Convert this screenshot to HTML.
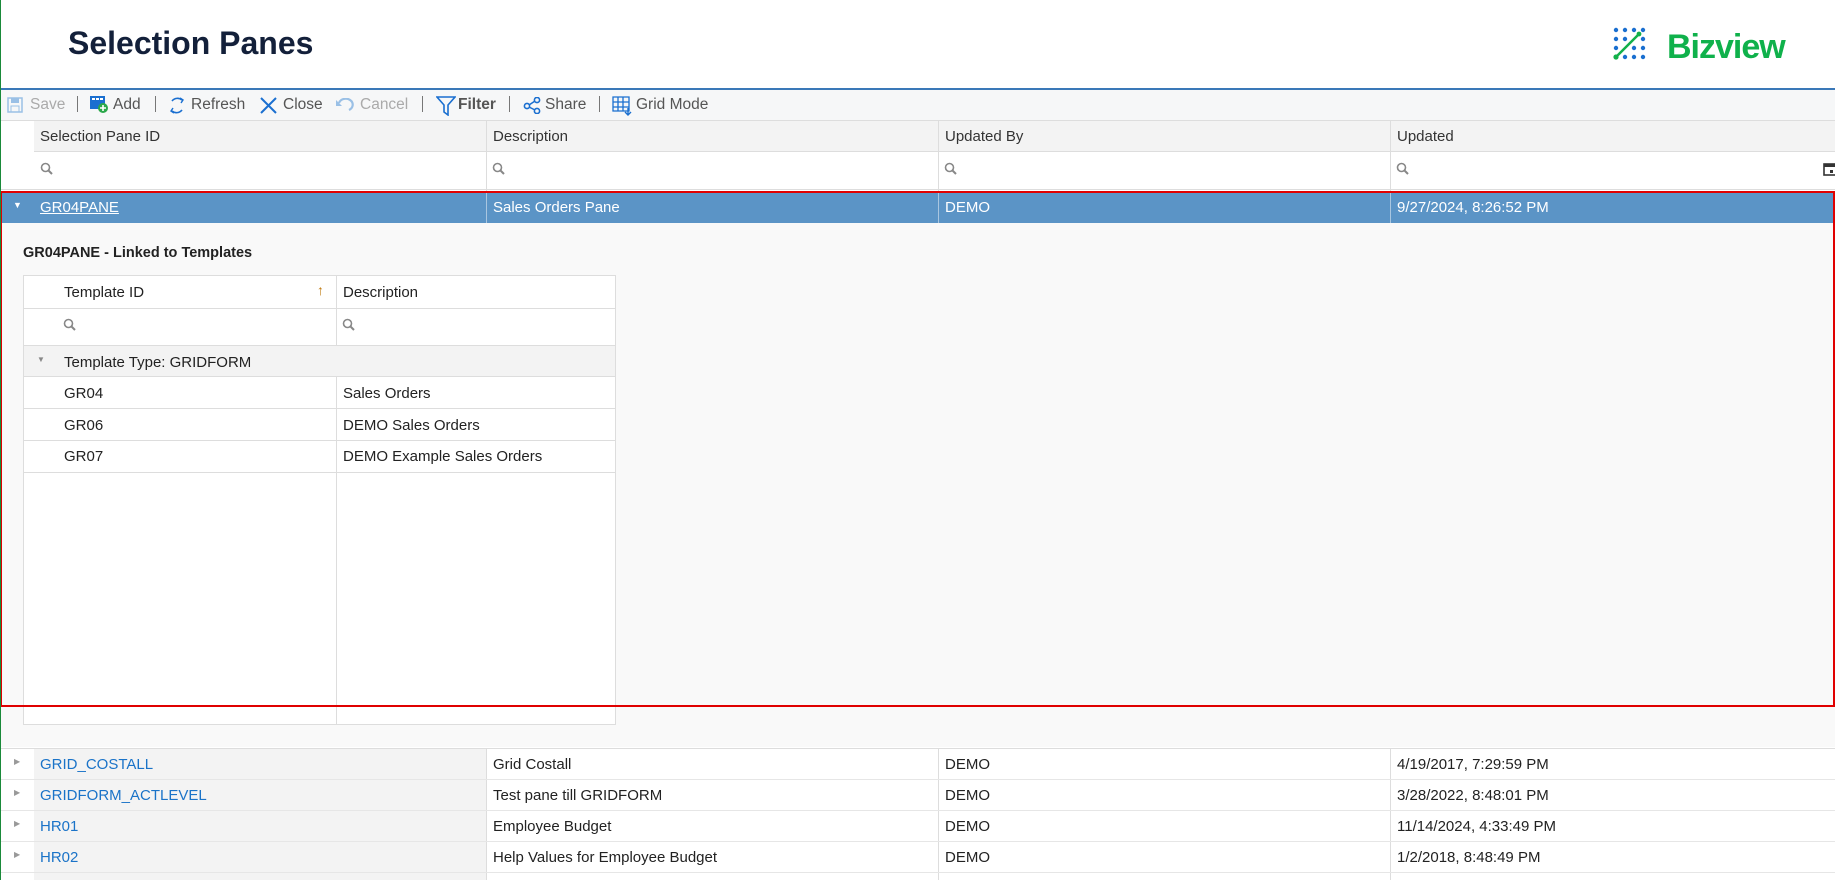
<!DOCTYPE html>
<html><head><meta charset="utf-8"><style>
*{margin:0;padding:0;box-sizing:border-box}
body{width:1835px;height:880px;overflow:hidden;background:#fff;font-family:"Liberation Sans",sans-serif;font-size:15px;color:#222;position:relative}
.a{position:absolute;white-space:nowrap}
.tb{color:#555;top:96px;font-size:15.5px}
.sep{position:absolute;top:96px;width:1px;height:16px;background:#777}
.hl{position:absolute;background:#ddd}
.link{color:#1a73c8}
</style></head><body>
<div class="a" style="left:0;top:0;width:1px;height:880px;background:#1a8a3a"></div>
<div class="a" style="left:68px;top:25px;font-size:32px;font-weight:bold;color:#13203a">Selection Panes</div>
<svg class="a" style="left:1612px;top:26px" width="40" height="38">
<g fill="#1a6fd0"><circle cx="4" cy="4" r="2.2"/><circle cx="13" cy="4" r="2.2"/><circle cx="22" cy="4" r="2.2"/><circle cx="31" cy="4" r="2.2"/>
<circle cx="4" cy="13" r="2.2"/><circle cx="13" cy="13" r="2.2"/><circle cx="31" cy="13" r="2.2"/>
<circle cx="4" cy="22" r="2.2"/><circle cx="22" cy="22" r="2.2"/><circle cx="31" cy="22" r="2.2"/>
<circle cx="13" cy="31" r="2.2"/><circle cx="22" cy="31" r="2.2"/><circle cx="31" cy="31" r="2.2"/></g>
<path d="M4 31 L13 22 L22 13 L27 8" stroke="#12b04a" stroke-width="2.5" fill="none"/><circle cx="4" cy="31" r="2.6" fill="#12b04a"/><circle cx="27" cy="8" r="2.4" fill="#12b04a"/></svg>
<div class="a" style="left:1667px;top:28px;font-size:34px;font-weight:bold;color:#0fb14b;letter-spacing:-1px">Bizview</div>
<div class="a" style="left:0;top:88px;width:1835px;height:2px;background:#3a78b8"></div>
<div class="a" style="left:0;top:90px;width:1835px;height:31px;background:#f6f7f8;border-bottom:1px solid #ddd"></div>
<svg class="a" style="left:7px;top:97px" width="16" height="16"><rect x="1" y="1" width="14" height="14" fill="none" stroke="#9ac0e6" stroke-width="1.5"/><rect x="4" y="1" width="8" height="5" fill="#9ac0e6"/><rect x="4" y="9" width="8" height="6" fill="none" stroke="#9ac0e6"/></svg>
<div class="a tb" style="left:30px;color:#aaa">Save</div><div class="sep" style="left:77px"></div>
<svg class="a" style="left:90px;top:96px" width="19" height="18"><rect x="0" y="0" width="15" height="13" fill="#1a6fd0"/><rect x="2" y="2" width="3" height="2" fill="#fff"/><rect x="6" y="2" width="3" height="2" fill="#fff"/><rect x="10" y="2" width="3" height="2" fill="#fff"/><circle cx="13" cy="12" r="5" fill="#2aa84a"/><path d="M13 9v6M10 12h6" stroke="#fff" stroke-width="1.6"/></svg>
<div class="a tb" style="left:113px">Add</div><div class="sep" style="left:155px"></div>
<svg class="a" style="left:168px;top:96px" width="18" height="19"><path d="M4 5 A7 7 0 0 1 14 4 M14 14 A7 7 0 0 1 4 15" stroke="#1a6fd0" stroke-width="1.6" fill="none"/><path d="M12 2l3 2-2 3M6 17l-3-2 2-3" stroke="#1a6fd0" stroke-width="1.4" fill="none"/></svg>
<div class="a tb" style="left:191px">Refresh</div>
<svg class="a" style="left:260px;top:97px" width="17" height="17"><path d="M1 1L16 16M16 1L1 16" stroke="#1a6fd0" stroke-width="2"/></svg>
<div class="a tb" style="left:283px">Close</div>
<svg class="a" style="left:335px;top:98px" width="20" height="14"><path d="M4 5 A7 6 0 1 1 14 12" stroke="#9ac0e6" stroke-width="2.2" fill="none"/><path d="M1 2v6h6z" fill="#9ac0e6"/></svg>
<div class="a tb" style="left:360px;color:#aaa">Cancel</div><div class="sep" style="left:422px"></div>
<svg class="a" style="left:436px;top:96px" width="20" height="20"><path d="M1 1h18l-7 8v10l-4-3V9z" stroke="#1a6fd0" stroke-width="1.6" fill="none"/></svg>
<div class="a tb" style="left:458px;font-weight:bold">Filter</div><div class="sep" style="left:509px"></div>
<svg class="a" style="left:523px;top:97px" width="18" height="17"><circle cx="14" cy="3" r="2.6" fill="none" stroke="#1a6fd0" stroke-width="1.6"/><circle cx="4" cy="9" r="2.6" fill="none" stroke="#1a6fd0" stroke-width="1.6"/><circle cx="14" cy="14" r="2.6" fill="none" stroke="#1a6fd0" stroke-width="1.6"/><path d="M6 8l6-4M6 10l6 3" stroke="#1a6fd0" stroke-width="1.5"/></svg>
<div class="a tb" style="left:545px">Share</div><div class="sep" style="left:599px"></div>
<svg class="a" style="left:612px;top:96px" width="20" height="20"><path d="M1 1h16v14H1zM1 6h16M1 11h16M6 1v14M11 1v14" stroke="#1a6fd0" stroke-width="1.3" fill="none"/><path d="M16 12v7M13 16l3 3 3-3" stroke="#1a6fd0" stroke-width="1.4" fill="none"/></svg>
<div class="a tb" style="left:636px">Grid Mode</div>

<div class="a" style="left:34px;top:121px;width:1801px;height:31px;background:#f3f3f3;border-bottom:1px solid #ddd"></div>
<div class="hl" style="left:486px;top:121px;width:1px;height:70px"></div>
<div class="hl" style="left:938px;top:121px;width:1px;height:70px"></div>
<div class="hl" style="left:1390px;top:121px;width:1px;height:70px"></div>
<div class="a" style="left:40px;top:128px;color:#333">Selection Pane ID</div>
<div class="a" style="left:493px;top:128px;color:#333">Description</div>
<div class="a" style="left:945px;top:128px;color:#333">Updated By</div>
<div class="a" style="left:1397px;top:128px;color:#333">Updated</div>
<div class="a" style="left:0;top:189px;width:1835px;height:1px;background:#ddd"></div>
<svg class="a" style="left:40px;top:162px" width="14" height="14"><circle cx="5.5" cy="5.5" r="4" stroke="#888" stroke-width="1.6" fill="none"/><path d="M8.5 8.5L12 12" stroke="#888" stroke-width="2"/></svg>
<svg class="a" style="left:492px;top:162px" width="14" height="14"><circle cx="5.5" cy="5.5" r="4" stroke="#888" stroke-width="1.6" fill="none"/><path d="M8.5 8.5L12 12" stroke="#888" stroke-width="2"/></svg>
<svg class="a" style="left:944px;top:162px" width="14" height="14"><circle cx="5.5" cy="5.5" r="4" stroke="#888" stroke-width="1.6" fill="none"/><path d="M8.5 8.5L12 12" stroke="#888" stroke-width="2"/></svg>
<svg class="a" style="left:1396px;top:162px" width="14" height="14"><circle cx="5.5" cy="5.5" r="4" stroke="#888" stroke-width="1.6" fill="none"/><path d="M8.5 8.5L12 12" stroke="#888" stroke-width="2"/></svg>
<svg class="a" style="left:1823px;top:162px" width="12" height="14"><rect x="1" y="2" width="12" height="11" fill="none" stroke="#333" stroke-width="1.6"/><rect x="1" y="2" width="12" height="3" fill="#333"/><rect x="7" y="8" width="3" height="3" fill="#333"/></svg>

<div class="a" style="left:0;top:191px;width:1835px;height:556px;background:#f9f9f9"></div>
<div class="a" style="left:2px;top:193px;width:1831px;height:30px;background:#5b94c6"></div>
<div class="hl" style="left:486px;top:193px;width:1px;height:30px;background:#a9c6e0"></div>
<div class="hl" style="left:938px;top:193px;width:1px;height:30px;background:#a9c6e0"></div>
<div class="hl" style="left:1390px;top:193px;width:1px;height:30px;background:#a9c6e0"></div>
<div class="a" style="left:13px;top:200px;color:#fff;font-size:9px">▼</div>
<div class="a" style="left:40px;top:199px;color:#fff;text-decoration:underline">GR04PANE</div>
<div class="a" style="left:493px;top:199px;color:#fff">Sales Orders Pane</div>
<div class="a" style="left:945px;top:199px;color:#fff">DEMO</div>
<div class="a" style="left:1397px;top:199px;color:#fff">9/27/2024, 8:26:52 PM</div>
<div class="a" style="left:23px;top:245px;font-weight:bold;font-size:14.5px;color:#222">GR04PANE - Linked to Templates</div>

<div class="a" style="left:23px;top:275px;width:593px;height:450px;background:#fff;border:1px solid #ddd"></div>
<div class="hl" style="left:336px;top:276px;width:1px;height:448px"></div>
<div class="hl" style="left:23px;top:308px;width:593px;height:1px"></div>
<div class="a" style="left:24px;top:345px;width:591px;height:32px;background:#f3f3f3;border-top:1px solid #ddd;border-bottom:1px solid #ddd"></div>
<div class="hl" style="left:23px;top:408px;width:593px;height:1px"></div>
<div class="hl" style="left:23px;top:440px;width:593px;height:1px"></div>
<div class="hl" style="left:23px;top:472px;width:593px;height:1px"></div>
<div class="a" style="left:64px;top:284px">Template ID</div>
<div class="a" style="left:317px;top:282px;color:#c07a10;font-size:14px">↑</div>
<div class="a" style="left:343px;top:284px">Description</div>
<svg class="a" style="left:63px;top:318px" width="14" height="14"><circle cx="5.5" cy="5.5" r="4" stroke="#888" stroke-width="1.6" fill="none"/><path d="M8.5 8.5L12 12" stroke="#888" stroke-width="2"/></svg>
<svg class="a" style="left:342px;top:318px" width="14" height="14"><circle cx="5.5" cy="5.5" r="4" stroke="#888" stroke-width="1.6" fill="none"/><path d="M8.5 8.5L12 12" stroke="#888" stroke-width="2"/></svg>
<div class="a" style="left:37px;top:355px;color:#888;font-size:8px">▼</div>
<div class="a" style="left:64px;top:354px">Template Type: GRIDFORM</div>
<div class="a" style="left:64px;top:385px">GR04</div><div class="a" style="left:343px;top:385px">Sales Orders</div>
<div class="a" style="left:64px;top:417px">GR06</div><div class="a" style="left:343px;top:417px">DEMO Sales Orders</div>
<div class="a" style="left:64px;top:448px">GR07</div><div class="a" style="left:343px;top:448px">DEMO Example Sales Orders</div>

<div class="a" style="left:0;top:191px;width:1835px;height:516px;border:2px solid #e00000"></div>

<div class="a" style="left:0;top:748px;width:1835px;height:132px;background:#fff"></div>
<div class="a" style="left:34px;top:748px;width:452px;height:132px;background:#f3f3f3"></div>
<div class="hl" style="left:486px;top:748px;width:1px;height:132px"></div>
<div class="hl" style="left:938px;top:748px;width:1px;height:132px"></div>
<div class="hl" style="left:1390px;top:748px;width:1px;height:132px"></div>
<div class="hl" style="left:0;top:748px;width:1835px;height:1px"></div>
<div class="hl" style="left:0;top:779px;width:1835px;height:1px;background:#e6e6e6"></div>
<div class="hl" style="left:0;top:810px;width:1835px;height:1px;background:#e6e6e6"></div>
<div class="hl" style="left:0;top:841px;width:1835px;height:1px;background:#e6e6e6"></div>
<div class="hl" style="left:0;top:872px;width:1835px;height:1px;background:#e6e6e6"></div>
<div class="a" style="left:14px;top:757px;color:#999;font-size:8px">▶</div>
<div class="a" style="left:14px;top:788px;color:#999;font-size:8px">▶</div>
<div class="a" style="left:14px;top:819px;color:#999;font-size:8px">▶</div>
<div class="a" style="left:14px;top:850px;color:#999;font-size:8px">▶</div>
<div class="a link" style="left:40px;top:756px">GRID_COSTALL</div><div class="a" style="left:493px;top:756px">Grid Costall</div><div class="a" style="left:945px;top:756px">DEMO</div><div class="a" style="left:1397px;top:756px">4/19/2017, 7:29:59 PM</div>
<div class="a link" style="left:40px;top:787px">GRIDFORM_ACTLEVEL</div><div class="a" style="left:493px;top:787px">Test pane till GRIDFORM</div><div class="a" style="left:945px;top:787px">DEMO</div><div class="a" style="left:1397px;top:787px">3/28/2022, 8:48:01 PM</div>
<div class="a link" style="left:40px;top:818px">HR01</div><div class="a" style="left:493px;top:818px">Employee Budget</div><div class="a" style="left:945px;top:818px">DEMO</div><div class="a" style="left:1397px;top:818px">11/14/2024, 4:33:49 PM</div>
<div class="a link" style="left:40px;top:849px">HR02</div><div class="a" style="left:493px;top:849px">Help Values for Employee Budget</div><div class="a" style="left:945px;top:849px">DEMO</div><div class="a" style="left:1397px;top:849px">1/2/2018, 8:48:49 PM</div>
<div class="a" style="left:0;top:0;width:1px;height:880px;background:#1a8a3a"></div>
</body></html>
